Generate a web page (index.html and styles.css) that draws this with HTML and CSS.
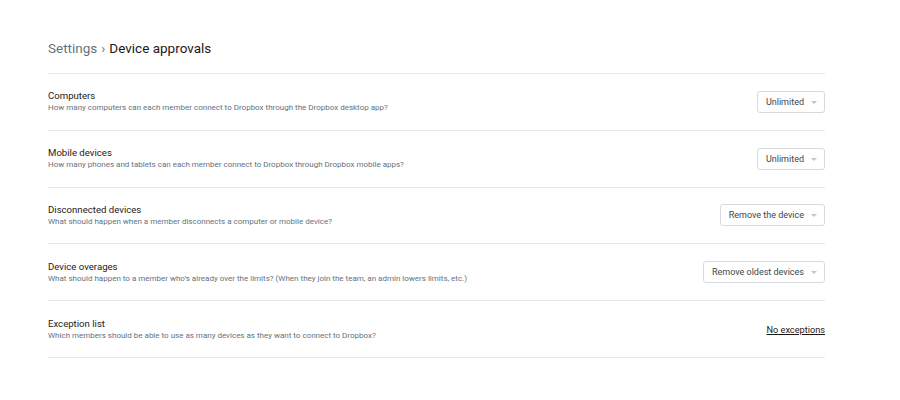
FILE: index.html
```html
<!DOCTYPE html>
<html lang="en">
<head>
<meta charset="utf-8">
<title>Device approvals</title>
<link rel="stylesheet" href="styles.css">
</head>
<body>
<div class="page">
  <h1 class="crumbs"><span class="crumb-parent">Settings</span><span class="crumb-sep">&rsaquo;</span><span class="crumb-current">Device approvals</span></h1>
  <div class="list">
    <div class="row">
      <div class="info">
        <div class="label">Computers</div>
        <div class="desc">How many computers can each member connect to Dropbox through the Dropbox desktop app?</div>
      </div>
      <div class="select">Unlimited<span class="caret"></span></div>
    </div>
    <div class="row">
      <div class="info">
        <div class="label">Mobile devices</div>
        <div class="desc">How many phones and tablets can each member connect to Dropbox through Dropbox mobile apps?</div>
      </div>
      <div class="select">Unlimited<span class="caret"></span></div>
    </div>
    <div class="row">
      <div class="info">
        <div class="label">Disconnected devices</div>
        <div class="desc">What should happen when a member disconnects a computer or mobile device?</div>
      </div>
      <div class="select">Remove the device<span class="caret"></span></div>
    </div>
    <div class="row">
      <div class="info">
        <div class="label">Device overages</div>
        <div class="desc">What should happen to a member who’s already over the limits? (When they join the team, an admin lowers limits, etc.)</div>
      </div>
      <div class="select">Remove oldest devices<span class="caret"></span></div>
    </div>
    <div class="row">
      <div class="info">
        <div class="label">Exception list</div>
        <div class="desc">Which members should be able to use as many devices as they want to connect to Dropbox?</div>
      </div>
      <a class="link" href="#">No exceptions</a>
    </div>
  </div>
</div>
</body>
</html>
```
FILE: styles.css
```css
html, body {
  margin: 0;
  padding: 0;
  background: #ffffff;
}
body {
  font-family: Roboto, "Liberation Sans", Arial, sans-serif;
  color: #1e1919;
}
.page {
  width: 777px;
  padding: 38px 0 0 48px;
}
.crumbs {
  margin: 0;
  padding: 0 0 15px 0;
  font-size: 13.5px;
  line-height: 20px;
  font-weight: 400;
  border-bottom: 1px solid #e6e8eb;
  display: flex;
  align-items: center;
}
.crumb-parent {
  color: #637282;
}
.crumb-sep {
  color: #637282;
  margin: 0 4px;
}
.crumb-current {
  color: #1e1919;
}
.row {
  height: 55.8px;
  border-bottom: 1px solid #e6e8eb;
  display: flex;
  align-items: center;
  justify-content: space-between;
}
.info {
  display: flex;
  flex-direction: column;
}
.label {
  font-size: 9.6px;
  line-height: 13px;
  color: #1e1919;
}
.desc {
  font-size: 8px;
  line-height: 12px;
  color: #637282;
}
.select {
  height: 20px;
  border: 1px solid #d6dadf;
  border-radius: 3px;
  padding: 0 7px 0 8px;
  display: flex;
  align-items: center;
  font-size: 9px;
  color: #3d464d;
}
.caret {
  width: 0;
  height: 0;
  border-left: 3px solid transparent;
  border-right: 3px solid transparent;
  border-top: 3px solid #c1c7cd;
  margin-left: 7px;
  margin-top: 1px;
}
.link {
  font-size: 9.2px;
  color: #1e1919;
  text-decoration: underline;
}
```
